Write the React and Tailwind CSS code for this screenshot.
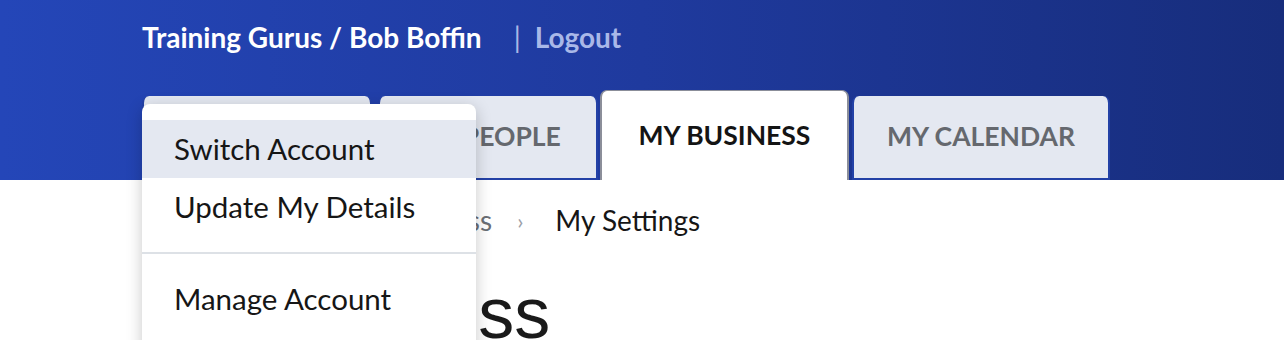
import { useState } from 'react';

const tabs = [
  { label: 'MY ACCOUNT', w: 'w-[230px]', ml: '' },
  { label: 'MY PEOPLE', w: 'w-[220px]', ml: 'ml-[6px]' },
  { label: 'MY BUSINESS', w: 'w-[249px]', ml: 'ml-[2px]', active: true },
  { label: 'MY CALENDAR', w: 'w-[258px]', ml: 'ml-[3px]' },
];

const Tab = ({ tab }) => {
  if (tab.active) {
    return (
      <div
        className={`${tab.w} ${tab.ml} h-[90px] bg-white rounded-t-[7px] border-x-2 border-t border-[#8b8e99] border-b-0 flex items-center justify-center text-[26.5px] font-bold text-[#141414]`}
      >
        {tab.label}
      </div>
    );
  }
  return (
    <div
      className={`${tab.w} ${tab.ml} h-[84px] bg-[#e4e8f1] rounded-t-[7px] border-x-2 border-b-2 border-[#2341a6] flex items-center justify-center text-[26.5px] font-bold text-[#65686e]`}
    >
      {tab.label}
    </div>
  );
};

export default function App() {
  const [open] = useState(true);

  return (
    <div className="relative w-[1284px] h-[340px] overflow-hidden bg-white font-['Lato','Liberation_Sans',sans-serif]">
      {/* Header */}
      <header className="h-[180px] bg-linear-to-r from-[#2446b8] via-[#1f3a9e] to-[#172d7c] pl-[142px] flex flex-col">
        <div className="h-[90px] pt-[23px] flex items-start text-[28px] leading-none font-bold">
          <span className="text-white">Training Gurus / Bob Boffin</span>
          <span className="ml-[32px] text-[#a9b8e8] font-normal">|</span>
          <span className="ml-[14px] text-[#a9b8e8]">Logout</span>
        </div>
        <div className="flex items-end flex-1">
          {tabs.map((t) => (
            <Tab key={t.label} tab={t} />
          ))}
        </div>
      </header>

      {/* Content */}
      <div className="pl-[142px]">
        <div className="h-[78px] flex items-center pt-[2px] text-[28px]">
          <span className="text-[#6b6f76]">Dashboard</span>
          <span className="ml-[25px] mr-[32px] text-[#9ca0a8] text-[22px]">›</span>
          <span className="text-[#6b6f76]">My Business</span>
          <span className="ml-[25px] mr-[32px] text-[#9ca0a8] text-[22px]">›</span>
          <span className="text-[#161616]">My Settings</span>
        </div>
        <h1 className="font-['Liberation_Sans',sans-serif] text-[72px] leading-none mt-[19px] text-[#1a1a1a] whitespace-nowrap">
          My Business
        </h1>
      </div>

      {/* Account dropdown */}
      {open && (
        <div className="absolute left-[142px] top-[104px] w-[334px] h-[260px] bg-white rounded-t-[8px] shadow-[0_4px_16px_rgba(0,0,0,0.22)] pt-[16px]">
          <div className="h-[58px] px-[32px] flex items-center bg-[#e4e8f1] text-[29.5px] text-[#161616]">
            Switch Account
          </div>
          <div className="h-[58px] px-[32px] flex items-center text-[29.5px] text-[#161616]">
            Update My Details
          </div>
          <div className="mt-[16px] h-[2px] bg-[#dde1e6]" />
          <div className="mt-[16px] h-[58px] px-[32px] flex items-center text-[29.5px] text-[#161616]">
            Manage Account
          </div>
        </div>
      )}
    </div>
  );
}
